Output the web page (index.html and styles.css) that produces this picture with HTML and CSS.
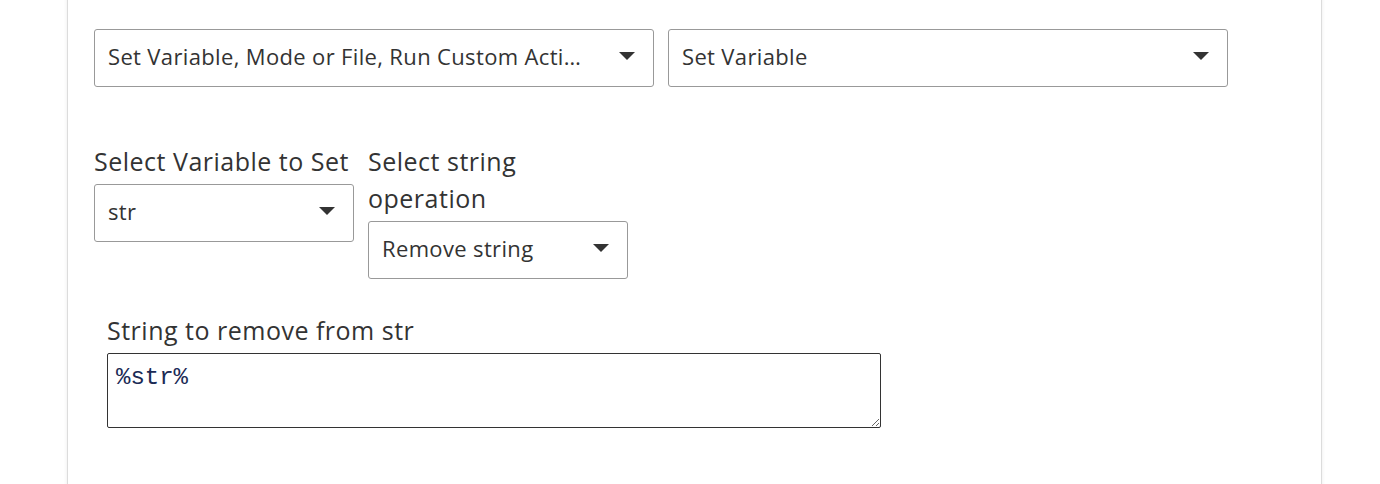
FILE: index.html
```html
<!DOCTYPE html>
<html lang="en">
<head>
  <meta charset="UTF-8">
  <title>Set Variable</title>
  <link rel="stylesheet" href="styles.css">
</head>
<body>
  <div class="card">
    <div class="action-row">
      <div class="select">
        <span class="select-text">Set Variable, Mode or File, Run Custom Acti…</span>
        <span class="caret"></span>
      </div>
      <div class="select">
        <span class="select-text">Set Variable</span>
        <span class="caret"></span>
      </div>
    </div>

    <div class="field-row">
      <div class="field">
        <label>Select Variable to Set</label>
        <div class="select small">
          <span class="select-text">str</span>
          <span class="caret"></span>
        </div>
      </div>
      <div class="field">
        <label>Select string operation</label>
        <div class="select small">
          <span class="select-text">Remove string</span>
          <span class="caret"></span>
        </div>
      </div>
    </div>

    <div class="text-field">
      <label>String to remove from str</label>
      <textarea class="code">%str%</textarea>
    </div>
  </div>
</body>
</html>
```

FILE: styles.css
```css
body {
  margin: 0;
  background: #fff;
  font-family: "Open Sans", "Liberation Sans", sans-serif;
  color: #333;
  overflow: hidden;
}

.card {
  margin: -20px 58px 0 67px;
  min-height: 600px;
  padding: 48px 26px 0 26px;
  border: 1px solid #dcdcdc;
  box-shadow: 0 0 4px rgba(0, 0, 0, 0.08);
  box-sizing: border-box;
}

.action-row {
  display: flex;
  gap: 14px;
}

.select {
  width: 560px;
  height: 58px;
  box-sizing: border-box;
  border: 1px solid #999;
  border-radius: 3px;
  display: flex;
  align-items: center;
  justify-content: space-between;
  padding: 0 18px 4px 13px;
  font-size: 22px;
  letter-spacing: 0.35px;
}

.select.small {
  width: 260px;
}

.caret {
  width: 0;
  height: 0;
  border-left: 8px solid transparent;
  border-right: 8px solid transparent;
  border-top: 8px solid #333;
}

.field-row {
  display: flex;
  gap: 14px;
  margin-top: 56px;
  align-items: flex-start;
}

.field {
  width: 260px;
}

label {
  display: block;
  font-size: 25px;
  line-height: 37px;
  letter-spacing: 0.5px;
  margin-bottom: 4px;
}

.text-field {
  margin: 33px 0 0 13px;
}

.code {
  display: block;
  width: 774px;
  height: 75px;
  box-sizing: border-box;
  border: 1px solid #333;
  border-radius: 2px;
  padding: 10px 8px;
  font-family: "Liberation Mono", monospace;
  font-size: 24px;
  color: #1b2a55;
  resize: both;
}
```
